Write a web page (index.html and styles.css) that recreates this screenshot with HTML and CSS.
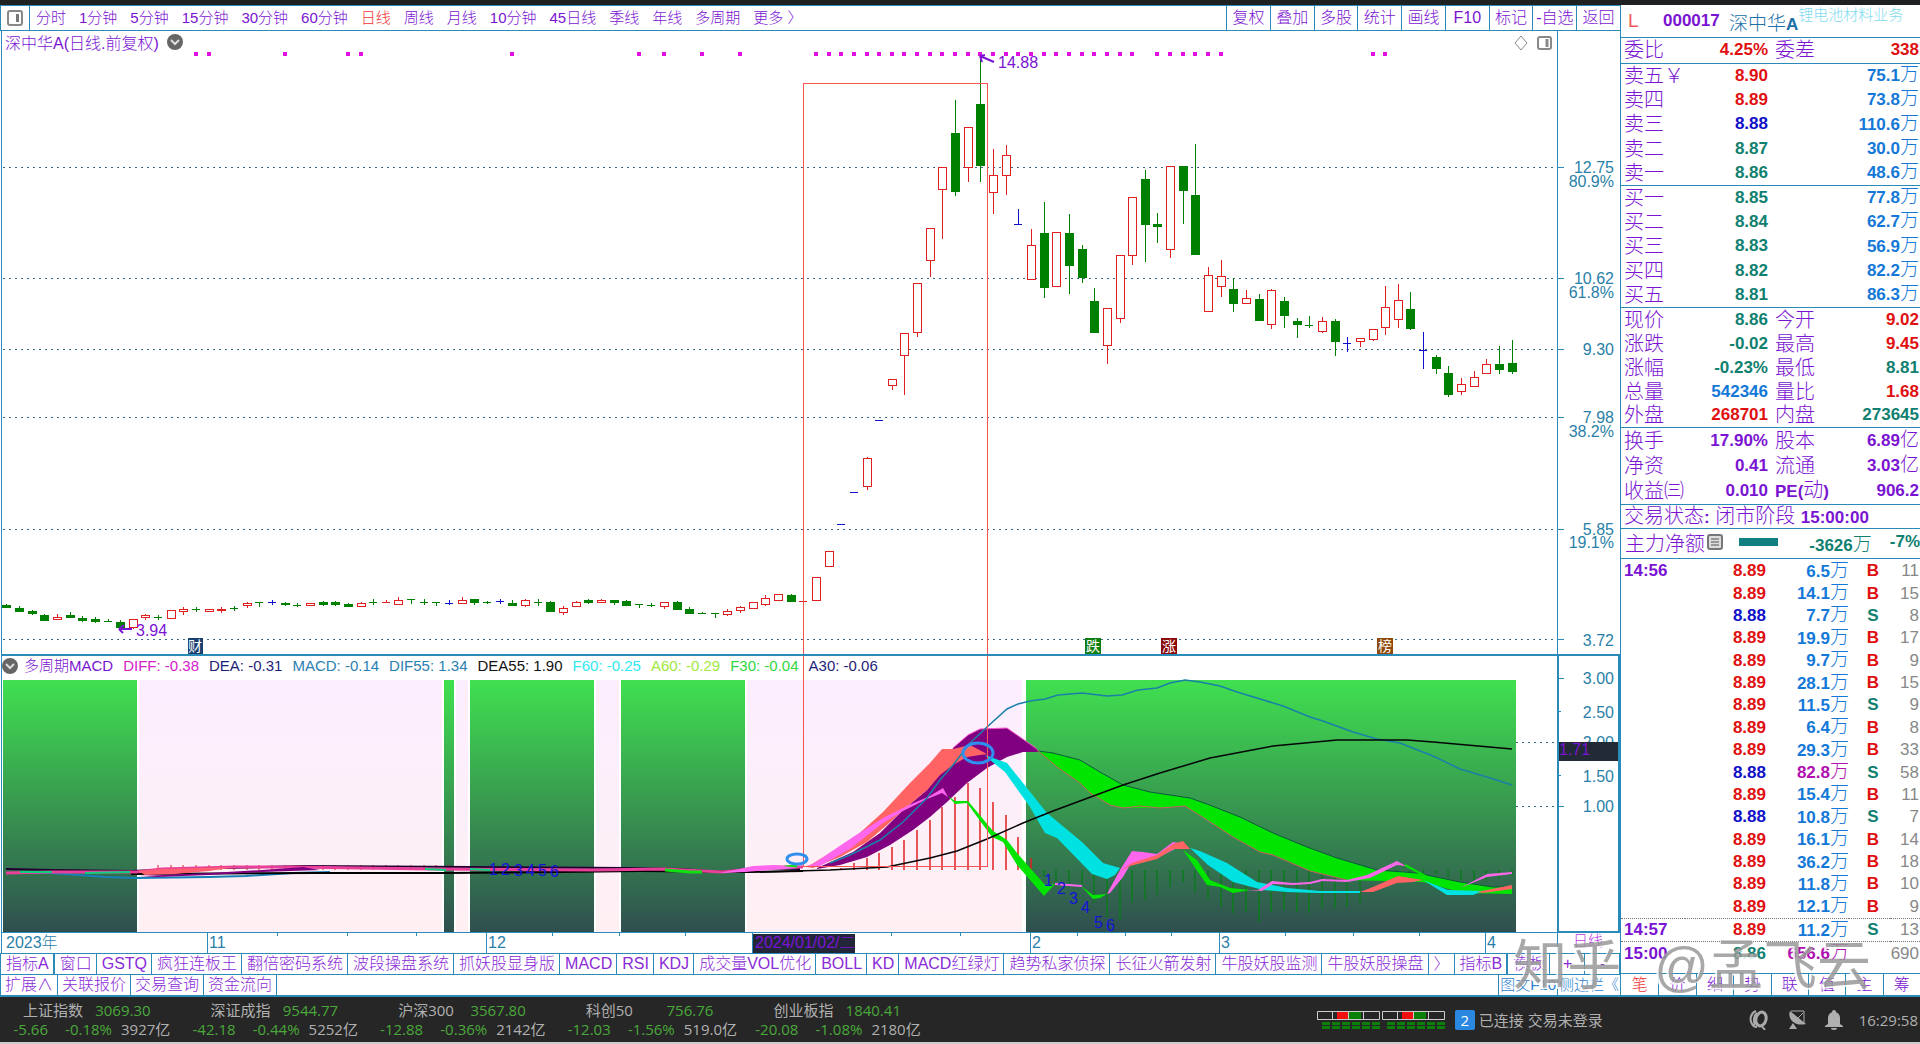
FILE: index.html
```html
<!DOCTYPE html>
<html lang="zh-CN">
<head>
    <meta charset="UTF-8">
    <meta name="viewport" content="width=device-width, initial-scale=1.0">
    <title>深中华A 000017</title>
    <link rel="stylesheet" href="styles.css">
</head>
<body>
    <div class="top-strip"></div>

    <div class="workspace">
        <main class="main">
            <nav class="toolbar">
                <button type="button" class="panel-btn" aria-label="面板">
                    <svg width="16" height="16" viewBox="0 0 16 16"><rect x="1" y="1" width="14" height="14" rx="2" fill="none" stroke="#888" stroke-width="2"/><rect x="9" y="4" width="3" height="8" fill="#777"/></svg>
                </button>
                <div class="periods">
                    <a href="#">分时</a>
                    <a href="#">1分钟</a>
                    <a href="#">5分钟</a>
                    <a href="#">15分钟</a>
                    <a href="#">30分钟</a>
                    <a href="#">60分钟</a>
                    <a href="#" class="active">日线</a>
                    <a href="#">周线</a>
                    <a href="#">月线</a>
                    <a href="#">10分钟</a>
                    <a href="#">45日线</a>
                    <a href="#">季线</a>
                    <a href="#">年线</a>
                    <a href="#">多周期</a>
                    <a href="#">更多 〉</a>
                </div>
                <div class="tools">
                    <button type="button">复权</button>
                    <button type="button">叠加</button>
                    <button type="button">多股</button>
                    <button type="button">统计</button>
                    <button type="button">画线</button>
                    <button type="button">F10</button>
                    <button type="button">标记</button>
                    <button type="button">-自选</button>
                    <button type="button">返回</button>
                </div>
            </nav>

            <section class="chart">
                <svg id="chart" viewBox="0 31 1620 922">
                    <defs>
                        <linearGradient id="greenBand" x1="0" y1="0" x2="0" y2="1">
                            <stop offset="0" stop-color="#40e050"/>
                            <stop offset="1" stop-color="#2f4f4f"/>
                        </linearGradient>
                        <linearGradient id="pinkBand" x1="0" y1="0" x2="0" y2="1">
                            <stop offset="0" stop-color="#fceeff"/>
                            <stop offset="1" stop-color="#fef0f2"/>
                        </linearGradient>
                    </defs>

                    <!-- price grid -->
                    <g class="grid">
                        <path d="M3 167H1557M3 278H1557M3 349H1557M3 417H1557M3 529H1557M3 639H1557"/>
                    </g>
                    <g id="dots" fill="#e010e0"></g>
                    <g id="candles"></g>

                    <g class="note">
                        <path d="M980 56l14 6M980 56l2 6M980 56l5 -1M119 629h13M119 629l5 -4M119 629l4 4"/>
                        <text x="998" y="68">14.88</text>
                        <text x="136" y="636">3.94</text>
                    </g>

                    <g class="tag">
                        <rect x="188" y="638" width="15" height="16" fill="#173f6f"/><text x="195" y="651">财</text>
                        <rect x="1085" y="638" width="16" height="16" fill="#0f7d0f"/><text x="1093" y="651">跌</text>
                        <rect x="1161" y="638" width="16" height="16" fill="#8b0a0a"/><text x="1169" y="651">涨</text>
                        <rect x="1377" y="638" width="16" height="16" fill="#8f4a0a"/><text x="1385" y="651">榜</text>
                    </g>

                    <g fill="none" stroke="#888">
                        <path d="M1521 36l6 7l-6 7l-6 -7z"/>
                        <rect x="1538" y="37" width="13" height="12" rx="2" stroke-width="2"/>
                        <path d="M1547 39v8" stroke-width="3"/>
                    </g>

                    <!-- macd background -->
                    <rect x="137" y="680" width="885" height="252" fill="url(#pinkBand)"/>
                    <g fill="url(#greenBand)">
                        <rect x="3" y="680" width="134" height="252"/>
                        <rect x="444" y="680" width="10" height="252"/>
                        <rect x="470" y="680" width="124" height="252"/>
                        <rect x="621" y="680" width="124" height="252"/>
                        <rect x="1026" y="680" width="490" height="252"/>
                    </g>
                    <path class="gap" d="M443 680V932M455 680V932M469 680V932M595 680V932M620 680V932M746 680V932M138 680V932"/>
                    <g class="grid"><path d="M1516 742H1557M1516 806H1557"/></g>
                    <g id="histogram"></g>

                    <!-- flat part of the indicator -->
                    <g fill="none" stroke-width="2">
                        <path stroke="#1780b8" d="M6 873L52 873L105 877L136 878L209 877L245 876L293 873L330 872"/>
                        <path stroke="#200030" d="M6 869L52 870L131 871L180 869L303 866L471 867L628 868L680 869L722 872L753 868L800 869"/>
                        <path stroke="#000" d="M131 874L314 873L445 873L560 872L640 871L748 872L803 871"/>
                        <path stroke="#e8409a" stroke-width="3" d="M6 873L52 872L136 872L162 869L235 867L293 867L429 869L594 870L664 869L722 872L774 867L803 867"/>
                        <path stroke="#10d080" d="M20 872L52 872M85 873L130 872M425 869L446 870M470 869L490 870"/>
                        <path stroke="#10e010" stroke-width="3" d="M665 870L690 872L702 872M785 867L797 866"/>
                    </g>
                    <path fill="#800080" d="M140 876L210 873L262 870L303 867L320 870L262 872L209 875L157 877Z"/>
                    <path fill="#ff6070" d="M138 871L162 869L200 868L235 867L209 871L175 874L145 875Z"/>
                    <path fill="#ff66ee" d="M720 873L753 866L774 865L800 868L770 870L745 872Z"/>

                    <!-- ribbons -->
                    <path fill="#800080" d="M817 868L853 852L880 833L903 810L927 790L943 770L953 748L968 735L980 729L1007 728L1037 749L1038 752L1023 752L1007 757L987 768L967 783L947 802L930 817L913 830L890 845L867 857L840 865L817 869Z"/>
                    <path fill="none" stroke="#ff55cc" d="M953 748L968 735L980 729L1007 728L1037 749"/>
                    <path fill="#ff6363" d="M807 867L853 839L883 812L910 783L930 763L942 749L953 749L970 745L987 754L980 755L967 757L953 765L940 775L927 790L903 810L887 825L867 842L840 857L813 868Z"/>
                    <path fill="#ff66ee" d="M803 867L813 864L853 837L883 818L907 806L930 796L943 788L948 797L942 793L927 799L903 811L883 823L850 849L820 866Z"/>
                    <path fill="#00e400" stroke="none" d="M1038 751L1053 753L1080 760L1100 772L1123 785L1150 792L1190 798L1207 804L1240 817L1273 833L1307 847L1337 858L1377 870L1417 873L1460 882L1493 887L1512 887V894L1463 893L1423 882L1347 880L1310 871L1273 855L1260 852L1233 837L1207 820L1185 806L1160 808L1123 808L1110 805L1090 793L1080 783L1057 767Z"/>
                    <path fill="none" stroke="#0b5a3c" d="M1038 751L1053 753L1080 760L1100 772L1123 785L1150 792L1190 798L1207 804L1240 817L1273 833L1307 847L1337 858L1377 870L1417 873L1460 882L1493 887L1512 887"/>
                    <path fill="none" stroke="#c86060" d="M1037 750L1057 767L1080 783L1090 793L1110 805L1123 808L1140 806L1160 808L1185 806L1207 820L1233 837L1260 852L1273 855L1310 871L1347 880"/>
                    <path fill="#00e1e1" d="M985 755L1007 763L1047 813L1082 842L1103 863L1120 868L1115 875L1107 879L1092 874L1057 838L1045 833L1030 807L1005 772L990 760Z"/>
                    <path fill="#00e1e1" d="M1190 848L1200 851L1227 863L1257 882L1287 888L1320 891L1360 891V893H1317L1287 892L1263 890L1233 882L1208 865Z"/>
                    <path fill="#00e1e1" d="M1423 880L1448 890L1483 891L1473 895H1447Z"/>
                    <path fill="#00e400" d="M948 796L955 801L968 801L993 831L1007 840L1017 853L1045 885L1055 884L1044 896L1017 865L1003 842L992 837L967 803L955 804Z"/>
                    <path fill="#00e400" d="M1081 886L1093 895L1107 894L1100 898L1093 899Z"/>
                    <path fill="#00e400" d="M1183 850L1197 860L1210 880L1230 888L1250 890L1233 893L1220 887L1207 885Z"/>
                    <path fill="none" stroke="#00e400" stroke-width="2" d="M1405 865L1425 876L1435 881"/>
                    <path fill="none" stroke="#ff66ee" stroke-width="2" d="M1055 884L1082 886"/>
                    <path fill="#ff66ee" d="M1107 894L1120 870L1132 851L1143 852L1157 854L1173 842L1185 844L1157 858L1130 865L1123 877L1110 893Z"/>
                    <path fill="#ff6363" d="M1120 871L1132 863L1157 855L1173 844L1183 841L1190 849L1173 849L1157 859L1130 866Z"/>
                    <path fill="#f868e8" d="M1247 890L1258 890L1272 881L1293 883L1310 882L1322 879L1347 880L1367 875L1397 861L1406 866L1397 865L1370 878L1347 882L1323 881L1310 884L1293 885L1273 884L1262 891Z"/>
                    <path fill="#ff6363" d="M1360 892L1373 887L1398 876L1423 880L1413 882L1397 883L1373 892Z"/>
                    <path fill="#f868e8" d="M1460 888L1487 874L1512 872V874L1487 877Z"/>
                    <path fill="#ff6363" d="M1477 892L1512 885V889L1483 893Z"/>

                    <path fill="none" stroke="#1a80a8" d="M830 863L850 855L880 840L903 822L927 798L940 780L953 765L970 743L987 727L1007 709L1018 704L1030 701L1045 699L1058 695L1082 693L1107 696L1122 695L1138 690L1157 688L1170 683L1185 680L1200 682L1220 686L1237 692L1283 706L1310 717L1323 721L1353 732L1377 739L1400 743L1433 756L1460 769L1487 777L1512 785" stroke-width="1.5"/>
                    <path fill="none" stroke="#050505" d="M760 872L830 870L887 867L930 858L957 851L987 839L1023 823L1053 811L1123 785L1160 773L1210 758L1273 746L1337 740L1407 740L1433 742L1512 749" stroke-width="1.5"/>

                    <g class="wave">
                        <text x="489" y="875">1</text><text x="501" y="875">2</text><text x="514" y="876">3</text><text x="526" y="876">4</text><text x="538" y="876">5</text><text x="550" y="877">6</text>
                        <text x="1044" y="886">1</text><text x="1057" y="894">2</text><text x="1069" y="904">3</text><text x="1081" y="913">4</text><text x="1094" y="928">5</text><text x="1106" y="931">6</text>
                    </g>

                    <!-- drawn marks -->
                    <rect class="mark-box" x="803" y="83" width="184" height="783"/>
                    <g fill="none" stroke="#2f8fee" stroke-width="3">
                        <ellipse cx="797" cy="859" rx="10" ry="5"/>
                        <ellipse cx="978" cy="753" rx="15" ry="10"/>
                    </g>

                    <!-- frame and scales -->
                    <g class="axis">
                        <path d="M1557 31V953M1 31V953M1557 167h7M1557 278h7M1557 349h7M1557 417h7M1557 529h7M1557 639h7M1557 678h7M1557 711h4M1557 775h4M1557 806h7M1 932H1620"/>
                        <path d="M207 932v21M486 932v21M752 932v21M1030 932v21M1219 932v21M1485 932v21M277 932v4M347 932v4M416 932v4M552 932v4M619 932v4M685 932v4M891 932v4M960 932v4M1077 932v4M1125 932v4M1171 932v4M1285 932v4M1353 932v4M1419 932v4"/>
                        <path d="M1 655H1620M1558 655V932H1619V655" stroke-width="2"/>
                    </g>
                    <g class="scale">
                        <text x="1614" y="173">12.75</text><text x="1614" y="187">80.9%</text>
                        <text x="1614" y="284">10.62</text><text x="1614" y="298">61.8%</text>
                        <text x="1614" y="355">9.30</text>
                        <text x="1614" y="423">7.98</text><text x="1614" y="437">38.2%</text>
                        <text x="1614" y="535">5.85</text><text x="1614" y="548">19.1%</text>
                        <text x="1614" y="646">3.72</text>
                        <text x="1614" y="684">3.00</text>
                        <text x="1614" y="718">2.50</text>
                        <text x="1614" y="748">2.00</text>
                        <text x="1614" y="782">1.50</text>
                        <text x="1614" y="812">1.00</text>
                    </g>
                    <rect x="1559" y="742" width="59" height="19" fill="#222a36"/>
                    <text class="cursor-text" x="1559" y="755">1.71</text>
                    <g class="months">
                        <text x="6" y="948">2023年</text><text x="209" y="948">11</text><text x="488" y="948">12</text>
                        <text x="1032" y="948">2</text><text x="1221" y="948">3</text><text x="1487" y="948">4</text>
                    </g>
                    <rect x="753" y="934" width="102" height="19" fill="#222638"/>
                    <text class="cursor-text" x="755" y="948">2024/01/02/二</text>
                    <text class="period-name" x="1573" y="946">日线</text>
                </svg>

                <div class="chart-title">
                    <span>深中华A(日线.前复权)</span>
                    <button type="button" class="round-btn" aria-label="展开"><svg width="16" height="16" viewBox="0 0 16 16"><circle cx="8" cy="8" r="8" fill="#666"/><path d="M4 6l4 4l4 -4" fill="none" stroke="#ddd" stroke-width="2"/></svg></button>
                </div>

                <div class="macd-legend">
                    <button type="button" class="round-btn" aria-label="指标"><svg width="16" height="16" viewBox="0 0 16 16"><circle cx="8" cy="8" r="8" fill="#666"/><path d="M4 6l4 4l4 -4" fill="none" stroke="#ddd" stroke-width="2"/></svg></button>
                    <span class="c-purple">多周期MACD</span>
                    <span class="c-magenta">DIFF: -0.38</span>
                    <span class="c-navy">DEA: -0.31</span>
                    <span class="c-blue">MACD: -0.14</span>
                    <span class="c-blue">DIF55: 1.34</span>
                    <span class="c-black">DEA55: 1.90</span>
                    <span class="c-cyan">F60: -0.25</span>
                    <span class="c-lime">A60: -0.29</span>
                    <span class="c-green">F30: -0.04</span>
                    <span class="c-navy">A30: -0.06</span>
                </div>
            </section>

            <nav class="tabs">
                <button type="button" class="on">指标A</button>
                <button type="button">窗口</button>
                <button type="button">GSTQ</button>
                <button type="button">疯狂连板王</button>
                <button type="button">翻倍密码系统</button>
                <button type="button">波段操盘系统</button>
                <button type="button">抓妖股显身版</button>
                <button type="button">MACD</button>
                <button type="button">RSI</button>
                <button type="button">KDJ</button>
                <button type="button">成交量VOL优化</button>
                <button type="button">BOLL</button>
                <button type="button">KD</button>
                <button type="button">MACD红绿灯</button>
                <button type="button">趋势私家侦探</button>
                <button type="button">长征火箭发射</button>
                <button type="button">牛股妖股监测</button>
                <button type="button">牛股妖股操盘</button>
                <button type="button">〉</button>
                <button type="button" class="on">指标B</button>
                <button type="button" class="grow">模板</button>
                <button type="button" class="grow">+</button>
                <button type="button" class="grow">-</button>
            </nav>
            <nav class="tabs tabs-bottom">
                <button type="button">扩展∧</button>
                <button type="button">关联报价</button>
                <button type="button">交易查询</button>
                <button type="button">资金流向</button>
                <div class="side-links">
                    <a href="#">图文F10</a>
                    <a href="#">侧边栏《</a>
                </div>
            </nav>
        </main>

        <aside class="quote">
            <header class="stock">
                <span class="flag">L</span>
                <span class="code">000017</span>
                <span class="name">深中华<b>A</b></span>
                <span class="topic">锂电池材料业务</span>
            </header>
            <table class="pairs single">
                <tr><th>委比</th><td class="up">4.25%</td><th>委差</th><td class="up">338</td></tr>
            </table>
            <table class="levels" id="sell"></table>
            <table class="levels" id="buy"></table>
            <table class="pairs">
                <tr><th>现价</th><td class="down">8.86</td><th>今开</th><td class="up">9.02</td></tr>
                <tr><th>涨跌</th><td class="down">-0.02</td><th>最高</th><td class="up">9.45</td></tr>
                <tr><th>涨幅</th><td class="down">-0.23%</td><th>最低</th><td class="down">8.81</td></tr>
                <tr><th>总量</th><td class="vol">542346</td><th>量比</th><td class="up">1.68</td></tr>
                <tr><th>外盘</th><td class="up">268701</td><th>内盘</th><td class="down">273645</td></tr>
            </table>
            <table class="pairs funds">
                <tr><th>换手</th><td>17.90%</td><th>股本</th><td>6.89<i>亿</i></td></tr>
                <tr><th>净资</th><td>0.41</td><th>流通</th><td>3.03<i>亿</i></td></tr>
                <tr><th>收益㈢</th><td>0.010</td><th><b>PE(</b>动<b>)</b></th><td>906.2</td></tr>
            </table>
            <div class="state">交易状态<b>:</b> 闭市阶段 <b>15:00:00</b></div>
            <div class="flow">
                <span>主力净额</span>
                <svg width="16" height="16" viewBox="0 0 16 16"><rect x="1" y="1" width="14" height="14" rx="2" fill="#ddd" stroke="#777" stroke-width="2"/><path d="M4 5h8M4 8h8M4 11h8" stroke="#555"/></svg>
                <span class="flow-bar"></span>
                <span class="flow-value down">-3626<i>万</i></span>
                <span class="down">-7%</span>
            </div>
            <table class="ticks" id="ticks"></table>
            <nav class="quote-tabs">
                <button type="button" class="active">笔</button>
                <button type="button">价</button>
                <button type="button">细</button>
                <button type="button">势</button>
                <button type="button">联</button>
                <button type="button">值</button>
                <button type="button">主</button>
                <button type="button">筹</button>
            </nav>
        </aside>
    </div>

    <footer class="status">
        <div class="indices">
            <div class="index"><p><span>上证指数</span><b>3069.30</b></p><p><b>-5.66</b><b>-0.18%</b><span>3927亿</span></p></div>
            <div class="index"><p><span>深证成指</span><b>9544.77</b></p><p><b>-42.18</b><b>-0.44%</b><span>5252亿</span></p></div>
            <div class="index"><p><span>沪深300</span><b>3567.80</b></p><p><b>-12.88</b><b>-0.36%</b><span>2142亿</span></p></div>
            <div class="index"><p><span>科创50</span><b>756.76</b></p><p><b>-12.03</b><b>-1.56%</b><span>519.0亿</span></p></div>
            <div class="index"><p><span>创业板指</span><b>1840.41</b></p><p><b>-20.08</b><b>-1.08%</b><span>2180亿</span></p></div>
        </div>
        <div class="connection">
            <svg width="128" height="18" viewBox="0 0 128 18">
                <g id="lamp">
                    <path d="M20 1h12v8h-12z" fill="#f01010"/><path d="M32 1h12v8h-12z" fill="#0a800a"/>
                    <path d="M.5 .5h62v8h-62zM15.500 .5v8M31.500 .5v8M46.500 .5v8" fill="none" stroke="#ccc"/>
                    <path d="M5 12.500h58M5 16.500h58" stroke="#0a800a" stroke-width="3" stroke-dasharray="8 2"/>
                </g>
                <use href="#lamp" x="65"/>
            </svg>
            <span class="badge">2</span>
            <span>已连接 交易未登录</span>
        </div>
        <div class="tray">
            <svg width="20" height="20" viewBox="0 0 20 20" fill="none" stroke="#aaa" stroke-width="2"><ellipse cx="12" cy="9" rx="5" ry="7" transform="rotate(15 12 9)" stroke-width="3"/><path d="M7 1C2 3 0 9 3 14c1 2 3 3 5 3M8 3C5 5 4 11 6 15M12 15l4 5"/></svg>
            <svg width="20" height="20" viewBox="0 0 20 20" fill="#aaa"><path d="M3 1C0 8 7 17 19 14L3 1z"/><path d="M4 1h13v12M11 8l5 -5" fill="none" stroke="#aaa"/><path d="M6 13l-4 6h8z"/></svg>
            <svg width="18" height="20" viewBox="0 0 18 20" fill="#b0b0b0"><circle cx="9" cy="2" r="2"/><path d="M9 2c-4 0-6 3-6 6v6L0 16v1h18v-1l-3-2V8c0-3-2-6-6-6zM6 18h6c0 1-1 2-3 2s-3-1-3-2z"/></svg>
            <time>16:29:58</time>
        </div>
    </footer>

    <div class="watermark"><span>知乎</span><span>@孟飞云</span></div>

    <script>
        const NS = 'http://www.w3.org/2000/svg';
        const STEP = 12.65;
        const RED = '#e02020';
        const GREEN = '#008000';
        const BLUE = '#1010c8';

        const xAt = i => 6.3 + STEP * i;

        function add(parent, tag, attrs) {
            const el = document.createElementNS(NS, tag);
            for (const key in attrs) el.setAttribute(key, attrs[key]);
            parent.appendChild(el);
        }

        // one bar per trading day: colour, high, body top, body bottom, low
        const days = [
            'g 604 605 607 607', 'g 606 608 611 612', 'g 610 611 613 615', 'g 614 615 620 621', 'r 614 617 619 620',
            'g 612 615 617 618', 'g 616 618 620 622', 'g 617 619 621 623', 'g 619 621 621 622', 'g 620 622 627 629',
            'r 619 619 627 629', 'r 614 615 617 620', 'g 615 617 617 620', 'r 610 610 618 618', 'r 607 609 611 615',
            'g 607 609 609 612', 'r 609 609 611 611', 'r 607 609 610 613', 'g 606 608 608 611', 'r 602 603 605 608',
            'g 602 602 602 607', 'b 600 602 602 605', 'g 602 603 604 606', 'g 603 605 605 607', 'r 603 603 605 605',
            'g 601 602 604 606', 'g 601 602 604 606', 'g 603 604 606 606', 'r 602 603 606 606', 'g 599 602 602 605',
            'r 600 602 602 603', 'r 597 600 604 604', 'g 599 599 599 604', 'g 599 602 602 605', 'g 602 602 602 606',
            'b 600 603 603 605', 'r 597 600 603 603', 'g 599 599 602 605', 'g 601 602 602 604', 'b 599 601 601 604',
            'g 600 603 605 606', 'r 599 600 605 607', 'g 599 602 602 606', 'g 601 602 611 612', 'r 606 608 612 615',
            'r 601 602 606 607', 'g 599 600 602 604', 'r 599 600 602 602', 'g 600 600 602 605', 'g 600 601 605 606',
            'g 604 604 604 608', 'g 603 605 605 607', 'r 602 602 606 609', 'g 601 602 609 610', 'g 607 609 613 614',
            'g 612 613 613 614', 'g 613 613 613 618', 'r 609 611 614 616', 'r 606 607 610 613', 'r 602 602 608 609',
            'r 595 598 604 606', 'r 594 594 600 600', 'g 594 595 601 602', 'r 593 601 601 602', 'r 577 577 600 600',
            'r 551 551 566 566', 'b 524 524 524 524', 'b 492 492 492 492', 'r 457 458 486 490', 'b 420 420 420 420',
            'r 379 379 385 390', 'r 333 333 355 395', 'r 283 283 332 337', 'r 228 228 260 277', 'r 167 167 189 239',
            'g 100 133 191 196', 'r 127 127 167 182', 'g 55 104 165 182', 'r 149 175 192 214', 'r 145 155 175 195',
            'b 209 224 224 224', 'r 229 245 279 279', 'g 202 233 287 298', 'r 232 232 286 286', 'g 214 233 265 294',
            'g 245 249 277 283', 'g 288 301 332 332', 'r 308 308 345 364', 'r 255 255 318 323', 'r 197 197 255 265',
            'g 170 179 224 262', 'g 213 224 226 243', 'r 166 166 249 258', 'g 166 166 190 224', 'g 144 195 254 254',
            'r 267 275 311 311', 'r 260 276 286 297', 'g 278 289 303 312', 'r 290 298 303 303', 'g 294 299 320 320',
            'r 289 290 324 329', 'g 297 301 315 328', 'g 318 321 324 338', 'g 316 325 325 328', 'r 317 321 331 333',
            'g 319 321 341 356', 'b 337 343 343 352', 'r 338 338 341 347', 'r 329 329 339 341', 'r 286 307 327 335',
            'r 284 300 319 328', 'g 292 309 328 330', 'b 332 350 350 369', 'g 355 357 368 374', 'g 366 373 394 397',
            'r 378 384 391 395', 'r 371 377 386 386', 'r 359 364 373 373', 'g 346 364 369 374', 'g 340 363 371 374'
        ];
        const candles = document.getElementById('candles');
        days.forEach((day, i) => {
            const [type, ...v] = day.split(' ');
            const [high, top, bottom, low] = v.map(Number);
            const x = Math.round(xAt(i));
            const color = { r: RED, g: GREEN, b: BLUE }[type];
            if (low > high) {
                add(candles, 'path', { d: `M${x} ${high}V${low}`, stroke: color });
            }
            if (bottom === top) {
                add(candles, 'path', { d: `M${x - 4} ${top}h8`, stroke: color });
            } else {
                add(candles, 'rect', { x: x - 4, y: top, width: 8, height: bottom - top, fill: type === 'g' ? GREEN : '#fff', stroke: color });
            }
        });

        // signal dots over the candles
        const dots = document.getElementById('dots');
        const signals = [15, 16, 22, 27, 28, 40, 50, 52, 55, 58, 108, 109];
        for (let i = 64; i <= 96; i++) if (i !== 90) signals.push(i);
        signals.forEach(i => add(dots, 'rect', { x: Math.round(xAt(i)) - 2, y: 52, width: 4, height: 4 }));

        // macd bars, zero line at y = 870
        const histogram = document.getElementById('histogram');
        const rising = [868, 863, 858, 853, 847, 840, 830, 820, 807, 797, 783, 788, 802, 815, 837, 858];
        const falling = [877, 881, 883, 885, 903, 917, 920, 903, 900, 895, 887, 882, 892, 900, 907, 913, 912, 922, 912, 910, 912, 913, 908, 908, 907, 903, 880, 878, 876, 874, 874, 874, 877, 880, 882, 880, 878, 876];
        rising.forEach((y, k) => add(histogram, 'path', { d: `M${Math.round(xAt(66 + k))} ${y}V870`, stroke: RED, 'stroke-width': 1.5 }));
        falling.forEach((y, k) => add(histogram, 'path', { d: `M${Math.round(xAt(82 + k))} 870V${y}`, stroke: '#0c7a1c', 'stroke-width': 1.5 }));
        for (let i = 12; i < 36; i++) add(histogram, 'path', { d: `M${Math.round(xAt(i))} 865V870`, stroke: RED });

        // order book
        function fillLevels(id, rows) {
            document.getElementById(id).innerHTML = rows.map(([label, price, cls, vol]) =>
                `<tr><th>${label}</th><td class="${cls}">${price}</td><td class="vol">${vol}<i>万</i></td></tr>`).join('');
        }
        fillLevels('sell', [
            ['卖五￥', '8.90', 'up', '75.1'],
            ['卖四', '8.89', 'up', '73.8'],
            ['卖三', '8.88', 'flat', '110.6'],
            ['卖二', '8.87', 'down', '30.0'],
            ['卖一', '8.86', 'down', '48.6']
        ]);
        fillLevels('buy', [
            ['买一', '8.85', 'down', '77.8'],
            ['买二', '8.84', 'down', '62.7'],
            ['买三', '8.83', 'down', '56.9'],
            ['买四', '8.82', 'down', '82.2'],
            ['买五', '8.81', 'down', '86.3']
        ]);

        // trades
        const trades = [
            ['14:56', '8.89', '6.5', 'B', 11], ['', '8.89', '14.1', 'B', 15], ['', '8.88', '7.7', 'S', 8],
            ['', '8.89', '19.9', 'B', 17], ['', '8.89', '9.7', 'B', 9], ['', '8.89', '28.1', 'B', 15],
            ['', '8.89', '11.5', 'S', 9], ['', '8.89', '6.4', 'B', 8], ['', '8.89', '29.3', 'B', 33],
            ['', '8.88', '82.8', 'S', 58], ['', '8.89', '15.4', 'B', 11], ['', '8.88', '10.8', 'S', 7],
            ['', '8.89', '16.1', 'B', 14], ['', '8.89', '36.2', 'B', 18], ['', '8.89', '11.8', 'B', 10],
            ['', '8.89', '12.1', 'B', 9], ['14:57', '8.89', '11.2', 'S', 13], ['15:00', '8.86', '656.6', '', 690]
        ];
        const priceClass = { '8.89': 'up', '8.88': 'flat', '8.86': 'down' };
        document.getElementById('ticks').innerHTML = trades.map(([time, price, vol, side, count], i) =>
            `<tr class="${i > 0 && time ? 'split' : ''}"><td>${time}</td><td class="${priceClass[price]}">${price}</td>` +
            `<td class="${vol > 50 ? 'big' : 'vol'}">${vol}<i>万</i></td><td class="${side === 'B' ? 'up' : 'down'}">${side}</td><td>${count}</td></tr>`).join('');
    </script>
</body>
</html>
```
FILE: styles.css
```css
* {
    box-sizing: border-box;
}
body {
    margin: 0;
    position: relative;
    background: #fff;
    color: #7a14d2;
    font-family: "Liberation Sans", "Noto Sans CJK SC", sans-serif;
    font-size: 16px;
    font-weight: 300;
    overflow-x: hidden;
}
button {
    font: inherit;
    color: inherit;
    background: none;
    border: 0;
    padding: 0;
    cursor: pointer;
}
a {
    color: inherit;
    text-decoration: none;
}
.top-strip {
    height: 5px;
    background: #1f2022;
}
.workspace {
    display: flex;
}
.main {
    flex: 1;
    min-width: 0;
}

/* toolbar */
.toolbar {
    display: flex;
    height: 26px;
    border: 1px solid #2a8ab8;
    border-width: 1px 0 1px 1px;
    font-size: 15px;
    line-height: 24px;
}
.panel-btn {
    width: 29px;
    border-right: 1px solid #2a8ab8;
    display: flex;
    align-items: center;
    justify-content: center;
}
.periods {
    display: flex;
    gap: 13px;
    padding-left: 6px;
    flex: 1;
    white-space: nowrap;
}
.active {
    color: #f03030;
}
.tools {
    display: grid;
    grid-template-columns: repeat(9, 1fr);
    width: 394px;
}
.tools button {
    border-left: 1px solid #2a8ab8;
    font-size: 16px;
    white-space: nowrap;
}

/* chart */
.chart {
    position: relative;
}
.chart svg {
    display: block;
}
#chart {
    width: 100%;
    height: auto;
    font-size: 16px;
}
.grid path {
    fill: none;
    stroke: #3a6a8a;
    stroke-width: 1;
    stroke-dasharray: 2 4;
    shape-rendering: crispEdges;
}
#candles {
    shape-rendering: crispEdges;
}
.gap {
    stroke: #fff;
    stroke-width: 2;
}
.mark-box {
    fill: none;
    stroke: #f45454;
    shape-rendering: crispEdges;
}
.axis path {
    fill: none;
    stroke: #2a8ab8;
    shape-rendering: crispEdges;
}
.scale text {
    fill: #2a7fa8;
    text-anchor: end;
}
.months text {
    fill: #2a7fa8;
}
.note path {
    fill: none;
    stroke: #7a14d2;
    stroke-width: 2;
}
.note text,
.cursor-text {
    fill: #7a14d2;
}
.period-name {
    fill: #b83ae0;
    font-size: 15px;
}
.wave text {
    fill: #1414d8;
}
.tag text {
    fill: #fff;
    font-size: 14px;
    font-weight: 400;
    text-anchor: middle;
}
.chart-title {
    position: absolute;
    top: 0;
    left: 5px;
    display: flex;
    align-items: center;
    gap: 8px;
    height: 22px;
}
.macd-legend {
    position: absolute;
    top: 68%;
    left: 2px;
    display: flex;
    align-items: center;
    height: 16px;
    gap: 10px;
    font-size: 15px;
    line-height: 16px;
    white-space: nowrap;
}
.macd-legend button {
    margin-right: -4px;
}
.c-purple { color: #7a14d2; }
.c-magenta { color: #d420c8; }
.c-navy { color: #1e1e78; }
.c-blue { color: #2a80b0; }
.c-black { color: #111; }
.c-cyan { color: #30e8f0; }
.c-lime { color: #a0e840; }
.c-green { color: #30d840; }

/* indicator tabs */
.tabs {
    display: flex;
    height: 21px;
    border-top: 1px solid #2a8ab8;
    border-left: 1px solid #2a8ab8;
    line-height: 20px;
}
.tabs button {
    padding: 0 4px 0 5px;
    border-right: 1px solid #2a8ab8;
    white-space: nowrap;
    color: #8a2ad8;
}
.tabs .on {
    border-right-width: 2px;
}
.tabs .grow {
    flex: 1;
}
.tabs-bottom {
    height: 23px;
    border-bottom: 2px solid #2a8ab8;
}
.tabs-bottom button {
    padding: 0 4px;
}
.side-links {
    display: flex;
    margin-left: auto;
    color: #2a80d0;
    font-size: 15px;
}
.side-links a {
    border-left: 1px solid #2a8ab8;
    padding: 0 1px;
    white-space: nowrap;
}

/* quote panel */
.quote {
    display: flex;
    flex-direction: column;
    width: 300px;
    border-left: 1px solid #2a8ab8;
    font-size: 17px;
}
.quote b {
    font-weight: bold;
    font-size: 17px;
}
.quote table {
    width: 100%;
    table-layout: fixed;
    border-collapse: collapse;
    border-bottom: 1px solid #2a8ab8;
}
.quote th,
.quote td {
    padding: 0;
    height: 24px;
    line-height: 22px;
    white-space: nowrap;
}
.quote th {
    font-size: 20px;
    font-weight: 300;
    text-align: left;
}
.quote td {
    font-weight: bold;
    text-align: right;
}
.quote i {
    font-style: normal;
    font-weight: 300;
    font-size: 19px;
}
.quote th:first-child {
    width: 64px;
    padding-left: 3px;
}
.quote th:nth-child(3) {
    width: 70px;
    padding-left: 6px;
}
.levels td:nth-child(2),
.pairs td:nth-child(2) {
    width: 84px;
}
.levels td,
.pairs td {
    padding-right: 1px;
}
.quote .levels {
    height: 122px;
}
.stock {
    display: flex;
    align-items: center;
    height: 33px;
    padding-left: 7px;
    border-bottom: 1px solid #2a8ab8;
    white-space: nowrap;
}
.flag {
    width: 35px;
    color: #f05858;
    font-size: 19px;
    font-weight: 400;
}
.code {
    width: 66px;
    font-weight: bold;
}
.name {
    color: #2070a8;
    font-size: 19px;
}
.topic {
    align-self: flex-start;
    color: #7fdcf0;
    font-size: 15px;
    line-height: 20px;
}
.single th,
.single td {
    height: 25px;
}
.funds {
    height: 77px;
}
.up { color: #e01010; }
.down { color: #108070; }
.flat { color: #1010c8; }
.vol { color: #1478d8; }
.big { color: #b010b0; }
.state {
    height: 24px;
    padding-left: 3px;
    border-bottom: 1px solid #2a8ab8;
    font-size: 20px;
    line-height: 22px;
}
.flow {
    display: flex;
    align-items: center;
    height: 30px;
    padding: 0 0 3px 4px;
    border-bottom: 1px solid #2a8ab8;
    font-weight: bold;
}
.flow > span:first-child {
    font-size: 20px;
    font-weight: 300;
}
.flow svg {
    margin: 0 16px 0 2px;
}
.flow-bar {
    width: 39px;
    height: 8px;
    background: #108080;
}
.flow-value {
    margin: 0 18px 0 auto;
}
.quote .ticks {
    height: 405px;
    margin-top: 1px;
    border-bottom: 0;
}
.quote .ticks td {
    height: auto;
    line-height: 20px;
}
.ticks td:nth-child(1) {
    width: 64px;
    padding-left: 3px;
    text-align: left;
}
.ticks td:nth-child(2) { width: 81px; }
.ticks td:nth-child(3) { width: 83px; }
.quote .ticks td:nth-child(4) {
    width: 41px;
    padding-left: 7px;
    text-align: center;
}
.quote .ticks td:nth-child(5) {
    padding-right: 1px;
    color: #888;
    font-weight: 400;
}
.split td {
    border-top: 1px dotted #777;
}
.quote-tabs {
    display: grid;
    grid-template-columns: repeat(8, 1fr);
    height: 24px;
    margin-top: auto;
    border-top: 1px solid #2a8ab8;
    border-bottom: 2px solid #2a8ab8;
    font-size: 16px;
    line-height: 21px;
}
.quote-tabs button + button {
    border-left: 1px solid #2a8ab8;
}

/* status bar */
.status {
    display: flex;
    align-items: center;
    height: 47px;
    background: #262626;
    border-bottom: 2px solid #ccc;
    color: #b0b0b0;
    font-family: "Open Sans", "Noto Sans CJK SC", sans-serif;
    font-size: 15px;
    font-weight: 400;
    white-space: nowrap;
}
.indices {
    display: flex;
    width: 938px;
}
.index {
    flex: 1;
}
.index p {
    display: flex;
    margin: 0;
    line-height: 19px;
}
.index b {
    color: #4aa83a;
    font-weight: 400;
    text-align: right;
}
.index p:first-child {
    justify-content: space-between;
    padding: 0 37px 0 23px;
}
.index p:last-child b {
    width: 64px;
}
.index p:last-child b:first-child {
    width: 48px;
}
.index p:last-child span {
    margin-left: 9px;
}
.connection {
    display: flex;
    align-items: center;
    margin-left: auto;
    gap: 4px;
}
.badge {
    width: 20px;
    height: 20px;
    margin-left: 6px;
    border-radius: 2px;
    background: #2a88e0;
    color: #fff;
    line-height: 20px;
    text-align: center;
}
.tray {
    display: flex;
    align-items: center;
    gap: 18px;
    margin: 0 2px 0 146px;
}
.tray time {
    margin-left: -2px;
}

/* sits over the bottom right corner */
.watermark {
    position: absolute;
    right: 49px;
    bottom: 51px;
    display: flex;
    gap: 33px;
    color: #999;
    font-size: 54px;
    font-weight: 400;
    line-height: 54px;
    opacity: 0.85;
    text-shadow: -2px 2px 0 #fff;
    pointer-events: none;
}
```
